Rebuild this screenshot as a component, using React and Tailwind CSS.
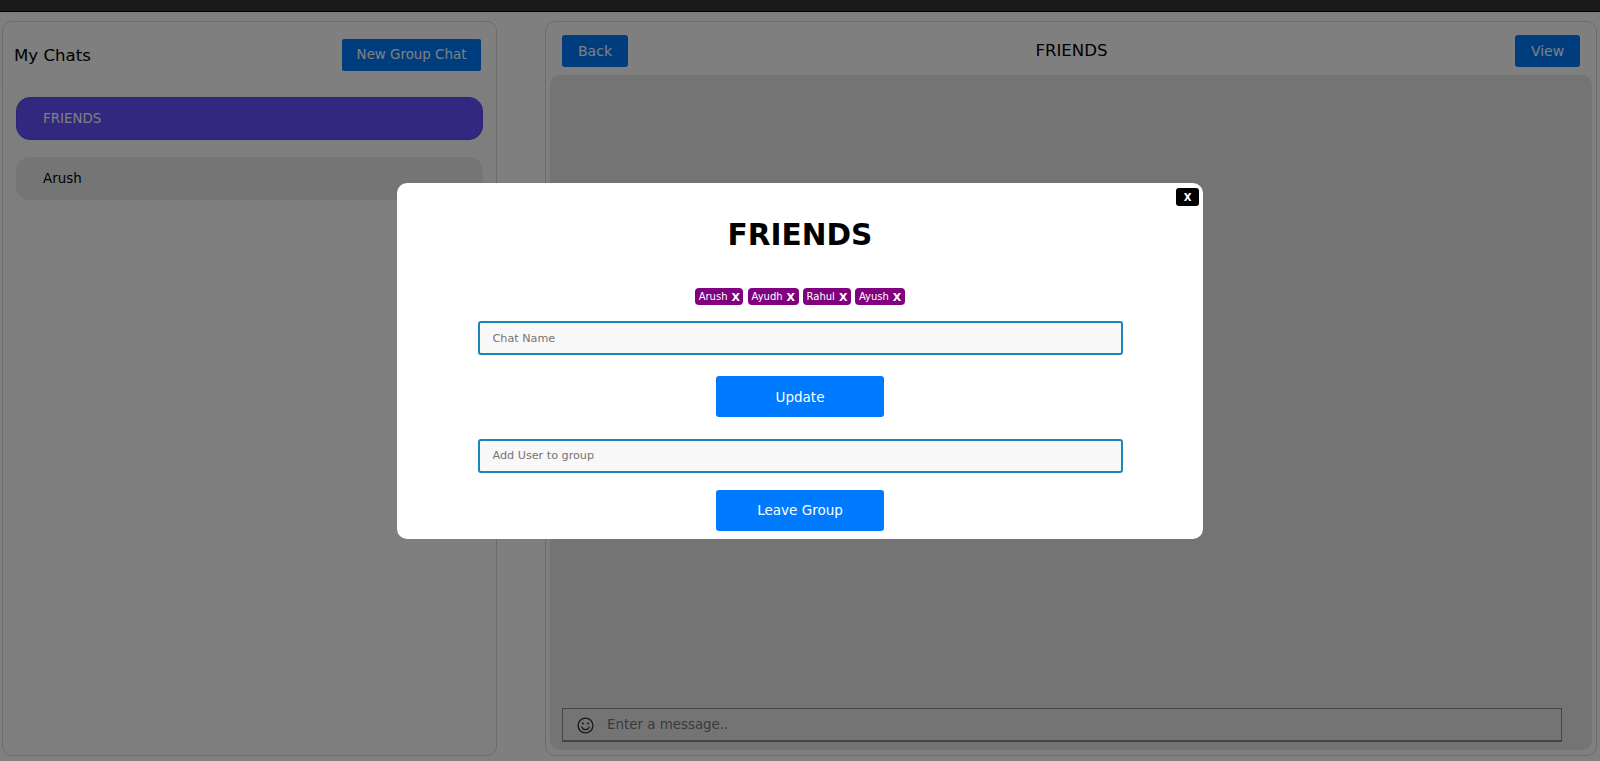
import React from "react";

const members = ["Arush", "Ayudh", "Rahul", "Ayush"];

const SmileIcon = () => (
  <svg width="17" height="17" viewBox="0 0 17 17" fill="none" stroke="#333" strokeWidth="1.3">
    <circle cx="8.5" cy="8.5" r="7.4" />
    <circle cx="5.9" cy="6.6" r="1" fill="#333" stroke="none" />
    <circle cx="11.1" cy="6.6" r="1" fill="#333" stroke="none" />
    <path d="M4.8 10.2c.8 1.6 2.1 2.4 3.7 2.4s2.9-.8 3.7-2.4" strokeLinecap="round" />
  </svg>
);

const MyChats = () => (
  <div className="w-[495px] ml-[2px] h-[735px] shrink-0 bg-white border border-[#d8d8d8] rounded-[10px] flex flex-col">
    <div className="h-[65px] shrink-0 pl-[11px] pr-[15px] pt-[17px] flex justify-between items-start">
      <span className="text-[16.6px] text-black leading-[33px]">My Chats</span>
      <button className="w-[139px] h-[32px] bg-[#007bff] text-white text-[13.4px] rounded-[2px]">
        New Group Chat
      </button>
    </div>
    <div className="flex-1 mx-[2px] pt-[10px] px-[11px] bg-[#fcfcfc] rounded-[10px] flex flex-col gap-[17px]">
      <div className="h-[43px] pl-[26px] pt-[1px] flex items-center bg-[#6650ff] text-white text-[13.4px] rounded-[14px] border border-[#5a46e0]">
        FRIENDS
      </div>
      <div className="h-[43px] pl-[27px] pt-[1px] flex items-center bg-[#ebebeb] text-black text-[13.4px] rounded-[14px]">
        Arush
      </div>
    </div>
  </div>
);

const ChatBox = () => (
  <div className="w-[552px] grow ml-[48px] mr-[3px] h-[735px] bg-white border border-[#d8d8d8] rounded-[10px] flex flex-col">
    <div className="h-[53px] shrink-0 px-[16px] pt-[13px] flex justify-between items-start">
      <button className="w-[66px] h-[32px] bg-[#007bff] text-white text-[14px] rounded-[3px]">Back</button>
      <span className="text-[16.6px] text-black leading-[32px]">FRIENDS</span>
      <button className="w-[65px] h-[32px] bg-[#007bff] text-white text-[14px] rounded-[3px]">View</button>
    </div>
    <div className="flex-1 mx-[4px] mb-[5px] bg-[#e8e8e8] rounded-[10px] flex flex-col justify-end px-[12px] pb-[8px]">
      <div className="w-[1000px] h-[34px] pt-[2px] border border-[#8a8a8a] border-b-2 flex items-center pl-[14px] gap-[13px]">
        <SmileIcon />
        <input
          placeholder="Enter a message.."
          className="flex-1 bg-transparent outline-none text-[13.4px] placeholder:text-[#757575]"
        />
      </div>
    </div>
  </div>
);

const GroupModal = () => (
  <div className="fixed inset-0 bg-black/50 flex justify-center items-start pt-[183px]">
    <div className="relative w-[806px] h-[356px] bg-white rounded-[10px] flex flex-col items-center">
      <button className="absolute top-[5px] right-[4px] w-[23px] h-[18px] bg-black text-white text-[10px] font-bold rounded-[3px]">
        X
      </button>
      <h2 className="mt-[32px] text-[29.6px] leading-[40px] font-bold text-black">FRIENDS</h2>
      <div className="mt-[33px] flex gap-[4.5px]">
        {members.map((name) => (
          <span
            key={name}
            className="h-[17px] px-[3.5px] bg-[#800080] text-white text-[10px] rounded-[4px] flex items-center gap-[4px]"
          >
            {name}
            <span className="font-bold text-[11px] leading-[11px] pt-[1px]">X</span>
          </span>
        ))}
      </div>
      <input
        placeholder="Chat Name"
        className="mt-[16px] w-[645px] h-[34px] shrink-0 px-[13px] bg-[#f8f8f8] border-2 border-[#1a85bd] rounded-[3px] outline-none text-[11.2px] placeholder:text-[#757575]"
      />
      <button className="mt-[21px] w-[168px] h-[41px] pt-[1px] shrink-0 bg-[#007bff] text-white text-[13.5px] rounded-[3px]">
        Update
      </button>
      <input
        placeholder="Add User to group"
        className="mt-[22px] w-[645px] h-[34px] pb-[1px] shrink-0 px-[13px] bg-[#f8f8f8] border-2 border-[#1a85bd] rounded-[3px] outline-none text-[11.2px] placeholder:text-[#757575]"
      />
      <button className="mt-[17px] w-[168px] h-[41px] shrink-0 bg-[#007bff] text-white text-[13.5px] rounded-[3px]">
        Leave Group
      </button>
    </div>
  </div>
);

const App = () => {
  return (
    <div className="h-screen overflow-hidden bg-white flex flex-col font-['DejaVu_Sans',sans-serif]">
      <div className="h-[12px] shrink-0 bg-[#343434] border-b border-black" />
      <div className="flex pt-[9px]">
        <MyChats />
        <ChatBox />
      </div>
      <GroupModal />
    </div>
  );
};

export default App;
